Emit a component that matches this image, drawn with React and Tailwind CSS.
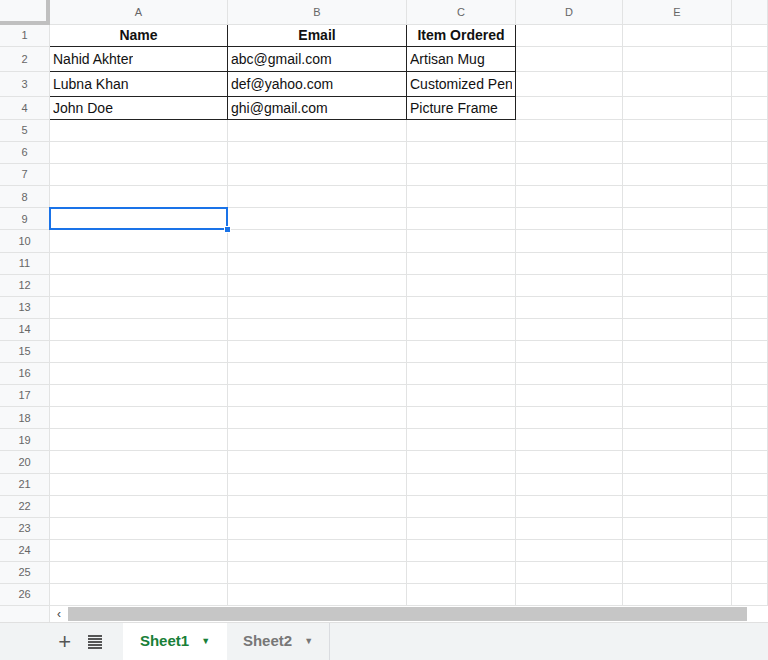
const cols = ['A', 'B', 'C', 'D', 'E', '']
const widths = ['w-[178px]', 'w-[179px]', 'w-[109px]', 'w-[107px]', 'w-[109px]', 'flex-1']
const data = [
  ['Name', 'Email', 'Item Ordered'],
  ['Nahid Akhter', 'abc@gmail.com', 'Artisan Mug'],
  ['Lubna Khan', 'def@yahoo.com', 'Customized Pen'],
  ['John Doe', 'ghi@gmail.com', 'Picture Frame'],
]
const heights = { 1: 'h-[22px]', 2: 'h-[25px]', 3: 'h-[25px]', 4: 'h-[23px]' }

export default function App() {
  const rows = Array.from({ length: 26 }, (_, i) => i + 1)
  return (
    <div className="w-[768px] h-[660px] bg-white flex flex-col overflow-hidden" style={{ fontFamily: 'Arial, "Liberation Sans", sans-serif' }}>
      <div className="flex h-[25px] bg-[#f8f9fa] text-[11px] text-[#666]">
        <div className="w-[50px] border-r-4 border-b-4 border-[#c0c0c0] shrink-0" />
        {cols.map((c, i) => (
          <div key={i} className={`${widths[i]} shrink-0 border-r border-b border-[#e2e3e3] flex items-center justify-center`}>{c}</div>
        ))}
      </div>
      <div className="flex-1 overflow-hidden">
        {rows.map(r => (
          <div key={r} className={`flex ${heights[r] || 'h-[22.1px]'}`}>
            <div className="w-[50px] shrink-0 bg-[#f8f9fa] border-r border-b border-[#e2e3e3] text-[11px] text-[#666] flex items-center justify-center">{r}</div>
            {cols.map((c, i) => {
              const v = r <= 4 && i < 3 ? data[r - 1][i] : null
              const boxed = r <= 4 && i < 3
              return (
                <div key={i} className={`${widths[i]} shrink-0 relative flex items-center whitespace-nowrap text-[14px] text-[#111] ${boxed ? 'border-r border-b border-[#222]' : 'border-r border-b border-[#e2e3e3]'} ${r === 1 ? 'justify-center font-bold' : 'px-[3px]'}`}>
                  <span className="overflow-hidden">{v}</span>
                  {r === 9 && i === 0 && (
                    <div className="absolute z-10 inset-[-1px] border-2 border-[#1a73e8]">
                      <div className="absolute -right-[5px] -bottom-[5px] w-[7px] h-[7px] bg-[#1a73e8] border border-white" />
                    </div>
                  )}
                </div>
              )
            })}
          </div>
        ))}
      </div>
      <div className="flex h-[16px] bg-white shrink-0">
        <div className="w-[50px] bg-[#f8f9fa] border-r border-[#e2e3e3]" />
        <div className="w-[18px] flex items-center justify-center text-[#444] text-[12px]">‹</div>
        <div className="w-[679px] bg-[#c6c6c6] my-[1px]" />
      </div>
      <div className="h-[38px] bg-[#f1f3f4] flex items-stretch shrink-0 border-t border-[#e0e0e0]">
        <div className="w-[123px] flex items-center justify-end gap-4 pr-5 text-[#555]">
          <span className="text-[22px] leading-none">+</span>
          <svg width="16" height="14" viewBox="0 0 16 14"><g fill="#555">{[0, 3, 6, 9, 12].map(y => <rect key={y} x="1" y={y} width="14" height="2" />)}</g></svg>
        </div>
        <div className="w-[104px] bg-white flex items-center justify-center gap-3 text-[15px] text-[#188038] font-semibold">
          Sheet1 <span className="text-[9px] text-[#188038]">▼</span>
        </div>
        <div className="w-[103px] border-r border-[#dadce0] flex items-center justify-center gap-3 text-[15px] text-[#777] font-semibold">
          Sheet2 <span className="text-[9px] text-[#777]">▼</span>
        </div>
      </div>
    </div>
  )
}
